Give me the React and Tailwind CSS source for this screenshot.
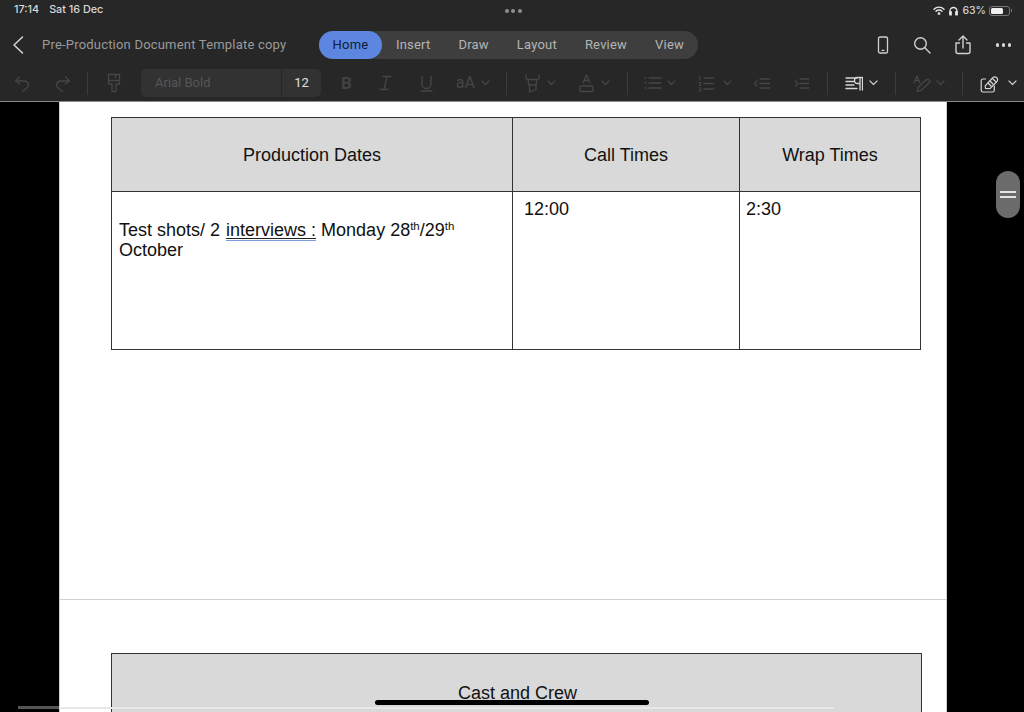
const Dim = "#464646";
const Bright = "#d6d6d6";
const Chev = ({ c = Dim }) => (
  <svg width="9" height="6" viewBox="0 0 9 6" fill="none" stroke={c} strokeWidth="1.2" strokeLinecap="round" strokeLinejoin="round"><path d="M1 1l3.5 3.5L8 1" /></svg>
);
const Sep = () => <div className="w-px h-[23px] bg-[#3c3c3c]" />;
const Ic = ({ w = 20, h = 20, c = Dim, sw = 1.3, children }) => (
  <svg width={w} height={h} viewBox={`0 0 ${w} ${h}`} fill="none" stroke={c} strokeWidth={sw} strokeLinecap="round" strokeLinejoin="round">{children}</svg>
);

export default function App() {
  return (
    <div className="relative w-[1024px] h-[712px] overflow-hidden bg-black flex flex-col font-['Liberation_Sans',Arial,sans-serif]">
      <header className="h-[102px] shrink-0 bg-[#272727] border-b border-[#8a8a8a] flex flex-col">
        {/* status bar */}
        <div className="h-[21px] flex items-center pl-[14px] pr-[12px] text-[10.8px] text-[#d8d8d8] font-['Inter',sans-serif] font-medium">
          <span>17:14</span>
          <span className="ml-[10px]">Sat 16 Dec</span>
          <div className="flex-1 flex justify-center gap-[2.5px] ml-[-10px]">
            <span className="w-[4px] h-[4px] rounded-full bg-[#8f8f8f]" />
            <span className="w-[4px] h-[4px] rounded-full bg-[#8f8f8f]" />
            <span className="w-[4px] h-[4px] rounded-full bg-[#8f8f8f]" />
          </div>
          <svg width="12" height="9" viewBox="0 0 12 9" fill="none" stroke="#e5e5e5" strokeWidth="1.4" strokeLinecap="round">
            <path d="M1 3.2a7 7 0 0 1 10 0" /><path d="M3 5.2a4.2 4.2 0 0 1 6 0" /><circle cx="6" cy="7.6" r="0.7" fill="#e5e5e5" />
          </svg>
          <svg className="ml-[4px]" width="9" height="10" viewBox="0 0 9 10" fill="none" stroke="#e5e5e5" strokeWidth="1.3">
            <path d="M1 8V5a3.5 3.5 0 0 1 7 0v3" /><rect x="0.8" y="5.8" width="1.4" height="3" fill="#e5e5e5" /><rect x="6.8" y="5.8" width="1.4" height="3" fill="#e5e5e5" />
          </svg>
          <span className="ml-[4px] text-[#cfcfcf] text-[10.5px]">63%</span>
          <div className="ml-[3px] w-[21px] h-[10px] rounded-[3px] border border-[#777] p-[1px] flex">
            <div className="w-[12px] bg-[#f0f0f0] rounded-[1.5px]" />
          </div>
          <div className="w-[1px] h-[3px] bg-[#777] ml-[1px]" />
        </div>
        {/* nav row */}
        <div className="h-[28px] mt-[10px] flex items-center text-[13px] font-['Roboto',sans-serif] tracking-[0.2px]">
          <svg className="ml-[12px]" width="12" height="20" viewBox="0 0 12 20" fill="none" stroke="#d6d6d6" strokeWidth="1.5" strokeLinecap="round" strokeLinejoin="round"><path d="M10.5 2L2 10l8.5 8" /></svg>
          <span className="ml-[18px] w-[277px] text-[#9a9a9a] whitespace-nowrap">Pre-Production Document Template copy</span>
          <nav className="w-[379px] h-[28px] rounded-[14px] bg-[#3e3e3e] flex items-center text-[#b5b5b5]">
            <span className="w-[63px] h-[28px] rounded-[14px] bg-[#5c86e0] text-[#111c33] flex items-center justify-center">Home</span>
            <span className="ml-[14px]">Insert</span>
            <span className="ml-[28px]">Draw</span>
            <span className="ml-[28px]">Layout</span>
            <span className="ml-[28px]">Review</span>
            <span className="ml-[28px]">View</span>
          </nav>
          <div className="ml-[179px]"><Ic w={12} h={18} c="#d0d0d0"><rect x="1.5" y="1" width="9" height="16" rx="1.6" /><path d="M5 14.3h2" /></Ic></div>
          <div className="ml-[24px]"><Ic w={18} h={18} c="#d0d0d0" sw={1.4}><circle cx="7.5" cy="7.5" r="5.8" /><path d="M11.8 11.8L17 17" /></Ic></div>
          <div className="ml-[23px]"><Ic w={18} h={20} c="#d0d0d0" sw={1.4}><path d="M9 13V1.5M5 5l4-4 4 4" /><path d="M5.5 8H2v8.5a2 2 0 0 0 2 2h10a2 2 0 0 0 2-2V8h-3.5" /></Ic></div>
          <div className="ml-[24px] flex gap-[2.5px]">
            <span className="w-[3.4px] h-[3.4px] rounded-full bg-[#d8d8d8]" />
            <span className="w-[3.4px] h-[3.4px] rounded-full bg-[#d8d8d8]" />
            <span className="w-[3.4px] h-[3.4px] rounded-full bg-[#d8d8d8]" />
          </div>
        </div>
        {/* toolbar */}
        <div className="h-[28px] mt-[10px] flex items-center">
          <div className="ml-[14px]"><Ic w={18} h={18}><path d="M5.5 3L1.5 7l4.5 3" /><path d="M2 7h8.5a3.9 3.9 0 0 1 2.8 6.6L8.5 17.5" /></Ic></div>
          <div className="ml-[21px]"><Ic w={18} h={18}><path d="M12.5 3l4 4-4.5 3" /><path d="M16 7H7.5a3.9 3.9 0 0 0-2.8 6.6l4.8 3.9" /></Ic></div>
          <div className="ml-[16px]"><Sep /></div>
          <div className="ml-[19px]"><Ic w={14} h={20}><path d="M1.5 1.5h11v9.5h-3.5v7.5H5V11H1.5z" /><path d="M1.5 7.5h11" /><path d="M8.5 1.5v3" /></Ic></div>
          <div className="ml-[20px] w-[140px] h-[28px] rounded-l-[5px] bg-[#323232] flex items-center pl-[14px] text-[13px] text-[#565656] font-['Roboto',sans-serif]">Arial Bold</div>
          <div className="ml-[1px] w-[39px] h-[28px] rounded-r-[5px] bg-[#323232] flex items-center justify-center text-[13px] text-[#e0e0e0] font-['Roboto',sans-serif]">12</div>
          <span className="ml-[20px] text-[17px] font-bold text-[#424242] font-['Roboto',sans-serif] leading-none">B</span>
          <div className="ml-[27px]"><Ic w={13} h={16}><path d="M4 1.5h8M1 14.5h8M8 1.5L5 14.5" /></Ic></div>
          <div className="ml-[28px]"><Ic w={13} h={17}><path d="M2 1.5V9a4.5 4.5 0 0 0 9 0V1.5" /><path d="M1 16h11" /></Ic></div>
          <span className="ml-[23px] text-[16px] text-[#464646] font-['Roboto',sans-serif] leading-none">aA</span>
          <div className="ml-[6px]"><Chev /></div>
          <div className="ml-[16px]"><Sep /></div>
          <div className="ml-[18px]"><Ic w={15} h={19}><path d="M1 1v3a1.5 1.5 0 0 0 1.5 1.5h10A1.5 1.5 0 0 0 14 4V1" /><path d="M3 5.5l1 5.5h7l1-5.5" /><path d="M4.5 11v7l6.5-2.5V11" /></Ic></div>
          <div className="ml-[7px]"><Chev /></div>
          <div className="ml-[23px]"><Ic w={15} h={19}><path d="M4 9l3.5-8L11 9M5 6.5h5" /><rect x="1" y="12" width="13" height="5.5" rx="1" /></Ic></div>
          <div className="ml-[7px]"><Chev /></div>
          <div className="ml-[17px]"><Sep /></div>
          <div className="ml-[16px]"><Ic w={18} h={14}><path d="M5 2h12M5 7h12M5 12h12M1 2h1M1 7h1M1 12h1" /></Ic></div>
          <div className="ml-[5px]"><Chev /></div>
          <div className="ml-[22px]"><Ic w={16} h={17}><path d="M1 1.5l1-.5v4M1 7.5h2l-2 3h2M1 13h2v3H1" strokeWidth="1" /><path d="M6 3h10M6 8.5h10M6 14h10" /></Ic></div>
          <div className="ml-[9px]"><Chev /></div>
          <div className="ml-[21px]"><Ic w={17} h={13}><path d="M4 4L1.5 6.5 4 9" /><path d="M7 2h10M7 6.5h10M7 11h10" /></Ic></div>
          <div className="ml-[24px]"><Ic w={15} h={13}><path d="M1.5 4L4 6.5 1.5 9" /><path d="M6 2h9M6 6.5h9M6 11h9" /></Ic></div>
          <div className="ml-[18px]"><Sep /></div>
          <div className="ml-[17px]"><Ic w={18} h={15} c={Bright}><path d="M1 2h11M1 5.5h8M1 9h8M1 12.5h11" /><path d="M15 2.5V14M17.5 1.5V14M17.5 1.5h-5a3 3 0 0 0 0 6h2.5" /></Ic></div>
          <div className="ml-[6px]"><Chev c="#c8c8c8" /></div>
          <div className="ml-[17px]"><Sep /></div>
          <div className="ml-[17px]"><Ic w={18} h={18}><path d="M1 9l3-7 3 7M2.2 6.5h3.6" /><path d="M4 17.5l1-4L13 6a2 2 0 0 1 3 3l-8 7.5z" /></Ic></div>
          <div className="ml-[5px]"><Chev /></div>
          <div className="ml-[17px]"><Sep /></div>
          <div className="ml-[17px]"><Ic w={19} h={19} c={Bright} sw={1.2}><path d="M5.5 5H3a1.8 1.8 0 0 0-1.8 1.8v9.4A1.8 1.8 0 0 0 3 18h9.5a1.8 1.8 0 0 0 1.8-1.8V12" /><path d="M5.5 14.5l-.3-2.7L12.5 4a2.8 2.8 0 0 1 4.5 3.5l-7 7.2z" /><path d="M8 9l3 3M10 7l3 3M12.5 4.5l3 3" /></Ic></div>
          <div className="ml-[9px]"><Chev c="#c8c8c8" /></div>
        </div>
      </header>

      {/* document page */}
      <main className="ml-[59px] w-[888px] flex-1 bg-white flex flex-col text-[#111] overflow-hidden border-x border-[#cfcfcf]">
        <div className="h-[498px] shrink-0 pt-[15px] pl-[51px] border-b border-[#d0d0d0]">
          <table className="w-[809px] table-fixed border-collapse border border-[#333] text-[18px]">
            <colgroup>
              <col className="w-[401px]" />
              <col className="w-[227px]" />
              <col className="w-[181px]" />
            </colgroup>
            <thead>
              <tr className="h-[74px] bg-[#d9d9d9]">
                <th className="border border-[#333] font-normal pt-[2px]">Production Dates</th>
                <th className="border border-[#333] font-normal pt-[2px]">Call Times</th>
                <th className="border border-[#333] font-normal pt-[2px]">Wrap Times</th>
              </tr>
            </thead>
            <tbody>
              <tr className="h-[158px]">
                <td className="border border-[#333] align-top pl-[7px] pt-[28px] leading-[20px]">
                  Test shots/ 2 <span className="ml-[1px] underline decoration-[#222] decoration-1 underline-offset-2 border-b border-[#7f9be0]">interviews :</span> Monday 28<sup className="text-[11.5px]">th</sup>/29<sup className="text-[11.5px]">th</sup>
                  <br />October
                </td>
                <td className="border border-[#333] align-top pl-[11px] pt-[7px] leading-[20px]">12:00</td>
                <td className="border border-[#333] align-top pl-[6px] pt-[7px] leading-[20px]">2:30</td>
              </tr>
            </tbody>
          </table>
        </div>
        <div className="pt-[53px] pl-[51px]">
          <div className="w-[811px] h-[80px] bg-[#d9d9d9] border border-[#333] pt-[26px] pl-[2px] text-center text-[18px]">Cast and Crew</div>
        </div>
      </main>

      {/* overlays */}
      <div className="absolute right-[4px] top-[171px] w-[24px] h-[47px] rounded-[12px] bg-[#6b6b6b] flex flex-col items-center justify-center gap-[3px]">
        <span className="w-[16px] h-[2px] bg-[#e4e4e4]" />
        <span className="w-[16px] h-[2px] bg-[#e4e4e4]" />
      </div>
      <div className="absolute left-[18px] top-[706px] w-[41px] h-[3px] bg-[#555]" />
      <div className="absolute left-[59px] top-[707px] w-[775px] h-[2px] bg-[#e8e8e8]" />
      <div className="absolute left-[375px] top-[700px] w-[274px] h-[5px] rounded-full bg-black" />
    </div>
  );
}
